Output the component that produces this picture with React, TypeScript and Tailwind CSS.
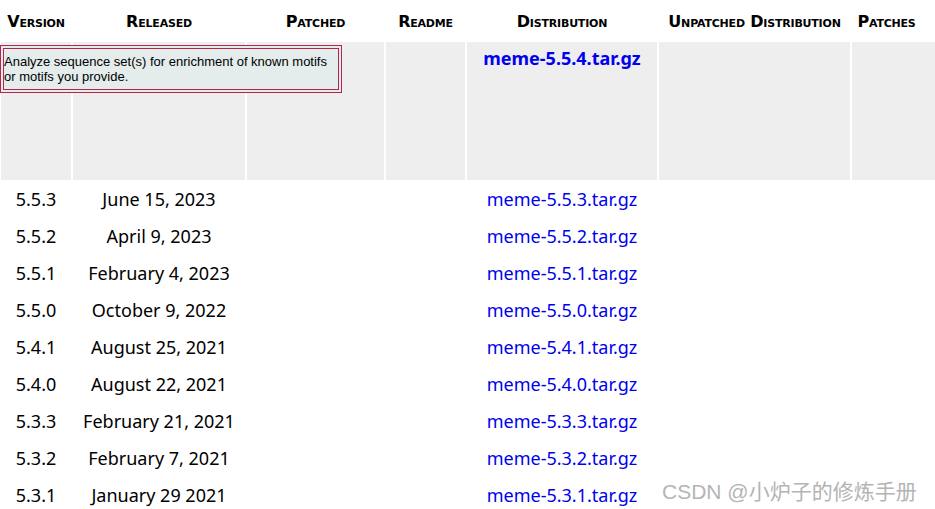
import React from 'react';

const releases = [
  { version: '5.5.3', date: 'June 15, 2023' },
  { version: '5.5.2', date: 'April 9, 2023' },
  { version: '5.5.1', date: 'February 4, 2023' },
  { version: '5.5.0', date: 'October 9, 2022' },
  { version: '5.4.1', date: 'August 25, 2021' },
  { version: '5.4.0', date: 'August 22, 2021' },
  { version: '5.3.3', date: 'February 21, 2021' },
  { version: '5.3.2', date: 'February 7, 2021' },
  { version: '5.3.1', date: 'January 29 2021' },
];

const headers = ['Version', 'Released', 'Patched', 'Readme', 'Distribution', 'Unpatched Distribution', 'Patches'];

const App: React.FC = () => {
  return (
    <div className="relative w-[935px] h-[509px] overflow-hidden bg-white">
      <table className="-ml-[1px] border-separate border-spacing-[2px] table-fixed w-[940px] font-['Noto_Sans',sans-serif] text-[18px] text-black">
        <colgroup>
          <col className="w-[70px]" />
          <col className="w-[172px]" />
          <col className="w-[137px]" />
          <col className="w-[79px]" />
          <col className="w-[190px]" />
          <col className="w-[191px]" />
          <col />
        </colgroup>
        <thead>
          <tr className="h-[38px]">
            {headers.map((h, i) => (
              <th
                key={h}
                className={`p-0 pt-[2px] font-['DejaVu_Sans',sans-serif] font-bold text-[16px] tracking-[-0.2px] [font-variant:small-caps] whitespace-nowrap text-center ${i === 6 ? 'pr-[16px]' : ''}`}
              >
                {h}
              </th>
            ))}
          </tr>
        </thead>
        <tbody>
          <tr className="h-[138px]">
            {headers.map((h, i) => (
              <td key={h} className="bg-[#eeeeee] align-top p-0 text-center">
                {i === 4 && (
                  <a href="#" className="inline-block mt-[3px] font-bold text-[18px] text-[#0000ee] no-underline">
                    meme-5.5.4.tar.gz
                  </a>
                )}
              </td>
            ))}
          </tr>
          {releases.map((r) => (
            <tr key={r.version} className="h-[35px]">
              <td className="p-0 text-center">{r.version}</td>
              <td className="p-0 text-center whitespace-nowrap">{r.date}</td>
              <td className="p-0"></td>
              <td className="p-0"></td>
              <td className="p-0 text-center">
                <a href="#" className="text-[#0000ee] no-underline">meme-{r.version}.tar.gz</a>
              </td>
              <td className="p-0"></td>
              <td className="p-0"></td>
            </tr>
          ))}
        </tbody>
      </table>

      {/* tooltip over the first row */}
      <div className="absolute left-0 top-[45px] w-[342px] h-[48px] border-[4px] border-double border-[#b3264a] bg-[#e4ecec] pl-[0px] pr-[2px] pt-[5px] font-['Liberation_Sans',Arial,sans-serif] text-[13px] leading-[15px] text-black">
        Analyze sequence set(s) for enrichment of known motifs or motifs you provide.
      </div>

      {/* watermark */}
      <div className="absolute left-[662px] top-[476px] font-['Liberation_Sans','Noto_Sans_CJK_SC',sans-serif] text-[21px] text-[#b4b4b4] whitespace-nowrap">
        CSDN @小炉子的修炼手册
      </div>
    </div>
  );
};

export default App;
